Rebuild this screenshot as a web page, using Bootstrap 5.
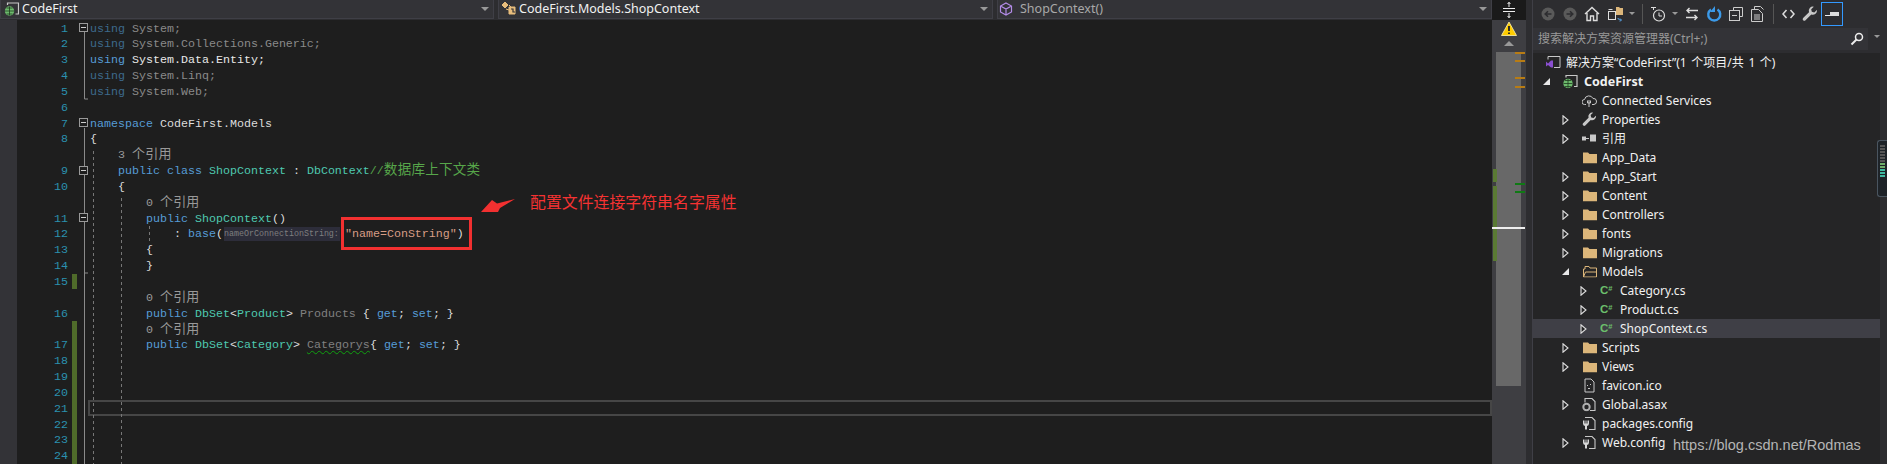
<!DOCTYPE html>
<html lang="zh">
<head>
<meta charset="utf-8">
<title>CodeFirst</title>
<link rel="stylesheet" href="https://cdn.jsdelivr.net/npm/bootstrap@5.3.0/dist/css/bootstrap.min.css">
<style>
html,body{height:464px;overflow:hidden;background:#2d2d30}
body{font-family:"Noto Sans","Noto Sans CJK SC",sans-serif;font-size:12px;color:#f1f1f1}
.vs-shell{height:464px;width:1887px}
.ed-main{width:1492px;height:464px}
.nav-strip{height:20px;background:#2d2d30;flex:none}
.nav-drop{height:19px;background:#333337;border:1px solid #3f3f46;border-top:0;color:#f1f1f1;font-size:12.5px;line-height:18px}
.nd1{width:494px;margin-right:4px}.nd2{width:495px;margin-right:4px}.nd3{width:495px;color:#a8a8a8}
.nd1 .nav-ico{margin-left:3px}.nd2 .nav-ico{margin-left:2px}.nd3 .nav-ico{margin-left:0}
.nav-ico{width:16px;height:14px;margin-right:2px;flex:none}
.nd2 .nav-ico{margin-right:2px}
.drop-caret{width:0;height:0;border:4px solid transparent;border-top-color:#999;border-bottom:0;margin-right:4px;margin-left:auto}
.code-pane{flex:1;background:#1e1e1e;border-left:17px solid #333337;font-family:"Liberation Mono","Noto Sans CJK SC",monospace;font-size:11.67px;color:#dcdcdc}
.crow{height:15.85px;line-height:15.85px;white-space:pre}
.ln{width:51px;text-align:right;color:#2b91af;flex:none;padding-top:1.5px}
.chg{width:5px;margin-left:4px;flex:none}
.chg.on{background:#4f6b2a}
.fold{width:13px;flex:none;position:relative}
.fbox{position:absolute;z-index:2;left:2px;top:3px;width:9px;height:9px;border:1px solid #999;background:#1e1e1e}
.fbox::after{content:"";position:absolute;left:1px;right:1px;top:3px;height:1px;background:#ccc}
.codetxt{flex:1;padding-top:1.5px}
.cur{margin-left:-2px;box-shadow:inset 0 0 0 2px #464646;height:16px}
.kw{color:#569cd6}.ty{color:#4ec9b0}.cm{color:#57a64a}.st{color:#d69d85}
.dk{color:#3d6a8c}.dt{color:#8a8a8a}.gy{color:#808080}.brt{color:#e8e8e8}
.cjk{font-family:"Noto Sans CJK SC",sans-serif;font-size:13.6px;letter-spacing:.2px;line-height:0}
.lens{color:#999}.lens .cjk{font-size:13px}
.hint{display:inline-block;width:116px;height:14px;line-height:14px;margin:0 5px 0 1px;background:#2d2d3a;color:#7f7f7f;font-size:8.33px;vertical-align:top;margin-top:0}
.squig{text-decoration:underline wavy #10a010 1px;text-underline-offset:2px}
.guides{position:absolute;left:0;top:0;z-index:1;pointer-events:none}
.redbox{position:absolute;z-index:3;left:341px;top:217px;width:131px;height:33px;border:3px solid #f23030}
.annot{position:absolute;z-index:3;left:530px;top:191px;color:#f53232;font-family:"Noto Sans CJK SC",sans-serif;font-size:15.9px;line-height:21px;white-space:nowrap}
.scroll-col{width:34px;height:464px;background:#3e3e42;flex:none}
.split-btn{height:20px;background:#1a1a1a;flex:none}
.scroll-area{flex:1}
.warn{position:absolute;left:8px;top:1px}
.up-arr{position:absolute;left:12px;top:21px;width:0;height:0;border:5px solid transparent;border-bottom-color:#999;border-top:0;border-left-width:5px}
.thumb{position:absolute;left:4px;top:32px;width:25px;height:334px;background:#686868}
.mk{position:absolute;left:23px;width:10px;height:2px}
.mo{background:#b87c14}.mg{background:#0f7a14}
.m1{top:32px}.m2{top:40px}.m3{top:57px}.m4{top:66px}.m5{top:163px}.m6{top:171px}
.gb{position:absolute;left:1px;width:4px;background:#5a7a34}
.gb1{top:149px;height:13px}.gb2{top:166px;height:75px}
.wl{position:absolute;left:0;right:1px;top:207px;height:2px;background:#eee}
.gap-col{width:7px;background:#2d2d30;flex:none;border-right:1px solid #3f3f46}
.sol-col{width:347px;height:464px;background:#252526;flex:none}
.edge-col{width:7px;flex:none;background:#2d2d30}
.tb{height:27px;background:#2d2d30;padding-left:4px;flex:none}
.tc{height:26px;flex:none}
.w22{width:22px}.w24{width:24px}.w10{width:10px}.w12{width:12px}.w8{width:8px}
.tsep{width:1px;height:20px;background:#555}
.tcaret{width:0;height:0;border:3.5px solid transparent;border-top-color:#999;border-bottom:0}
.pinbtn{width:22px;height:24px;border:1px solid #3399ff;margin-top:1px;flex:none}
.srch{height:22px;background:#333337;flex:none;margin-top:1px;color:#999;padding-left:5px;width:335px;line-height:22px;white-space:nowrap}
.srch-wrap{height:26px;background:#2d2d30;flex:none}
.srch-caret{margin-left:6px}
.tree{padding-top:0;flex:1}
.trow{height:19px;line-height:19px;white-space:nowrap;flex:none;color:#f1f1f1}
.trow.sel{background:#3f3f46}
.lv0{padding-left:13px;word-spacing:1.500px}.lv1{padding-left:10px}.lv2{padding-left:29px}.lv3{padding-left:47px}
.exp{width:20px;flex:none}
.tico{width:20px;flex:none;height:19px}
.prj-name{font-size:12.5px;margin-left:1px}
.cs{color:#6cbf6c;font-weight:700;font-size:11.5px;font-family:"Liberation Sans",sans-serif}
.cs sup{font-size:7.5px;top:-.35em;color:#6cbf6c}
.watermark{position:absolute;z-index:3;left:1673px;top:435px;color:#b5b5b5;font-family:"Liberation Sans",sans-serif;font-size:14.5px;line-height:20px;white-space:nowrap}
.rail{position:absolute;z-index:3;right:0;top:140px;width:10px;height:57px;background:#1e2328;border:1px solid #4a5560;border-right:0;border-radius:3px 0 0 3px;padding:4px 2px}
.rail i{display:block;height:2px;margin-bottom:1px;background:#555}
.rail i.rg{background:#6fae6a}.rail i.rc{background:#3fb8a0}
</style>
</head>
<body>
<svg width="0" height="0" class="position-absolute">
  <symbol id="s-fld" viewBox="0 0 14 12"><path d="M0 1h5l1.500 1.500H14V12H0z" fill="#dcb67a"/></symbol>
  <symbol id="s-fldo" viewBox="0 0 14 12"><path d="M.5 11.500V3.500H2V1h4l1 1.500h6.500v9z" fill="none" stroke="#dcb67a"/><path d="M.5 11.500l2-5H13.500" fill="none" stroke="#dcb67a"/></symbol>
  <symbol id="s-tri" viewBox="0 0 7 10"><path d="M1 .8V9.200L6 5z" fill="#252526" stroke="#e0e0e0" stroke-width="1.100"/></symbol>
  <symbol id="s-tris" viewBox="0 0 7 7"><path d="M7 0V7H0z" fill="#e8e8e8"/></symbol>
  <symbol id="s-proj" viewBox="0 0 15 14"><path d="M3 3V1h11v11h-3" fill="none" stroke="#c8c8c8" stroke-width="1.200"/><circle cx="5" cy="9" r="4.700" fill="#6dbb6d"/><path d="M.5 9h9M5 4.500v9M2 6h6M2 12h6" stroke="#1e3a1e" stroke-width=".8"/></symbol>
  <symbol id="s-gear" viewBox="0 0 14 14"><path d="M3 5V1h7l3 3v9H8" fill="none" stroke="#c8c8c8" stroke-width="1.100"/><circle cx="4.500" cy="9.500" r="3.200" fill="none" stroke="#b0b0b0" stroke-width="2"/></symbol>
  <symbol id="s-cfg" viewBox="0 0 14 14"><path d="M3 1h7l3 3v9H7" fill="none" stroke="#c8c8c8" stroke-width="1.100"/><path d="M1 4v3a2.500 2.500 0 0 0 2 2.500V13h2V9.500A2.500 2.500 0 0 0 7 7V4H5.500v3h-1V4h-1v3h-1V4z" fill="#d8d8d8"/></symbol>
  <symbol id="s-wr" viewBox="0 0 16 16"><path d="M15 4.500a4.200 4.200 0 0 1-5.700 4L3.500 14.300a1.700 1.700 0 0 1-2.400-2.400L7 6.200A4.200 4.200 0 0 1 11.800.7L9.200 3.300l.6 2.500 2.500.6 2.500-2.500z" fill="#c8c8c8"/></symbol>
  <symbol id="s-cl" viewBox="0 0 14 14"><circle cx="7" cy="7" r="6.500" fill="#5a5a5a"/><path d="M10.500 7H4.500M7 4.200 4.200 7 7 9.800" fill="none" stroke="#2d2d30" stroke-width="1.600"/></symbol>
</svg>

<div class="vs-shell d-flex position-relative">
  <div class="ed-main d-flex flex-column position-relative">
    <div class="nav-strip d-flex">
      <div class="nav-drop nd1 d-flex align-items-center">
        <svg class="nav-ico" viewBox="0 0 15 14"><use href="#s-proj"/></svg><span>CodeFirst</span><i class="drop-caret"></i>
      </div>
      <div class="nav-drop nd2 d-flex align-items-center">
        <svg class="nav-ico" viewBox="0 0 16 14"><path d="M1 3l3-3 3 3-3 3zM8 5h6v7H8zM5 7l3 1M8 3l2 2" fill="#e8bd7c" stroke="#e8bd7c"/><path d="M10 7h2v3h2" fill="none" stroke="#333337" stroke-width="1.200"/></svg><span>CodeFirst.Models.ShopContext</span><i class="drop-caret"></i>
      </div>
      <div class="nav-drop nd3 d-flex align-items-center">
        <svg class="nav-ico" viewBox="0 0 16 14"><path d="M8 1l5.500 3v6L8 13l-5.500-3V4zM2.500 4 8 7l5.500-3M8 7v6" fill="none" stroke="#b48ce8" stroke-width="1.200"/></svg><span class="ms-1">ShopContext()</span><i class="drop-caret"></i>
      </div>
    </div>
    <div class="code-pane">
      <div class="crow d-flex"><span class="ln">1</span><span class="chg"></span><span class="fold"><i class="fbox"></i></span><span class="codetxt"><span class="dk">using</span> <span class="dt">System;</span></span></div>
      <div class="crow d-flex"><span class="ln">2</span><span class="chg"></span><span class="fold"></span><span class="codetxt"><span class="dk">using</span> <span class="dt">System.Collections.Generic;</span></span></div>
      <div class="crow d-flex"><span class="ln">3</span><span class="chg"></span><span class="fold"></span><span class="codetxt"><span class="kw">using</span> <span class="brt">System.Data.Entity;</span></span></div>
      <div class="crow d-flex"><span class="ln">4</span><span class="chg"></span><span class="fold"></span><span class="codetxt"><span class="dk">using</span> <span class="dt">System.Linq;</span></span></div>
      <div class="crow d-flex"><span class="ln">5</span><span class="chg"></span><span class="fold"></span><span class="codetxt"><span class="dk">using</span> <span class="dt">System.Web;</span></span></div>
      <div class="crow d-flex"><span class="ln">6</span><span class="chg"></span><span class="fold"></span><span class="codetxt"></span></div>
      <div class="crow d-flex"><span class="ln">7</span><span class="chg"></span><span class="fold"><i class="fbox"></i></span><span class="codetxt"><span class="kw">namespace</span> CodeFirst.Models</span></div>
      <div class="crow d-flex"><span class="ln">8</span><span class="chg"></span><span class="fold"></span><span class="codetxt">{</span></div>
      <div class="crow d-flex"><span class="ln"></span><span class="chg"></span><span class="fold"></span><span class="codetxt lens">    3 <span class="cjk">个引用</span></span></div>
      <div class="crow d-flex"><span class="ln">9</span><span class="chg"></span><span class="fold"><i class="fbox"></i></span><span class="codetxt">    <span class="kw">public class</span> <span class="ty">ShopContext</span> : <span class="ty">DbContext</span><span class="cm">//<span class="cjk">数据库上下文类</span></span></span></div>
      <div class="crow d-flex"><span class="ln">10</span><span class="chg"></span><span class="fold"></span><span class="codetxt">    {</span></div>
      <div class="crow d-flex"><span class="ln"></span><span class="chg"></span><span class="fold"></span><span class="codetxt lens">        0 <span class="cjk">个引用</span></span></div>
      <div class="crow d-flex"><span class="ln">11</span><span class="chg"></span><span class="fold"><i class="fbox"></i></span><span class="codetxt">        <span class="kw">public</span> <span class="ty">ShopContext</span>()</span></div>
      <div class="crow d-flex"><span class="ln">12</span><span class="chg"></span><span class="fold"></span><span class="codetxt">            : <span class="kw">base</span>(<span class="hint">nameOrConnectionString:</span><span class="st">"name=ConString"</span>)</span></div>
      <div class="crow d-flex"><span class="ln">13</span><span class="chg"></span><span class="fold"></span><span class="codetxt">        {</span></div>
      <div class="crow d-flex"><span class="ln">14</span><span class="chg"></span><span class="fold"></span><span class="codetxt">        }</span></div>
      <div class="crow d-flex"><span class="ln">15</span><span class="chg on"></span><span class="fold"></span><span class="codetxt"></span></div>
      <div class="crow d-flex"><span class="ln"></span><span class="chg"></span><span class="fold"></span><span class="codetxt lens">        0 <span class="cjk">个引用</span></span></div>
      <div class="crow d-flex"><span class="ln">16</span><span class="chg"></span><span class="fold"></span><span class="codetxt">        <span class="kw">public</span> <span class="ty">DbSet</span>&lt;<span class="ty">Product</span>&gt; <span class="gy">Products</span> { <span class="kw">get</span>; <span class="kw">set</span>; }</span></div>
      <div class="crow d-flex"><span class="ln"></span><span class="chg on"></span><span class="fold"></span><span class="codetxt lens">        0 <span class="cjk">个引用</span></span></div>
      <div class="crow d-flex"><span class="ln">17</span><span class="chg on"></span><span class="fold"></span><span class="codetxt">        <span class="kw">public</span> <span class="ty">DbSet</span>&lt;<span class="ty">Category</span>&gt; <span class="gy squig">Categorys</span>{ <span class="kw">get</span>; <span class="kw">set</span>; }</span></div>
      <div class="crow d-flex"><span class="ln">18</span><span class="chg on"></span><span class="fold"></span><span class="codetxt"></span></div>
      <div class="crow d-flex"><span class="ln">19</span><span class="chg on"></span><span class="fold"></span><span class="codetxt"></span></div>
      <div class="crow d-flex"><span class="ln">20</span><span class="chg on"></span><span class="fold"></span><span class="codetxt"></span></div>
      <div class="crow d-flex"><span class="ln">21</span><span class="chg on"></span><span class="fold"></span><span class="codetxt cur"></span></div>
      <div class="crow d-flex"><span class="ln">22</span><span class="chg on"></span><span class="fold"></span><span class="codetxt"></span></div>
      <div class="crow d-flex"><span class="ln">23</span><span class="chg on"></span><span class="fold"></span><span class="codetxt"></span></div>
      <div class="crow d-flex"><span class="ln">24</span><span class="chg on"></span><span class="fold"></span><span class="codetxt"></span></div>
    </div>
    <svg class="guides" width="600" height="464" viewBox="0 0 600 464">
      <path d="M84.500 30V99H88M84.500 128V464M84.500 273H88" fill="none" stroke="#8a8a8a"/>
      <path d="M93.500 151V464M121.500 198V464M149.500 226V242" fill="none" stroke="#777" stroke-dasharray="3 3"/>
      <path d="M481 212l11-12 5 3.500 18-4.500-15 9-2 4z" fill="#f23030"/>
    </svg>
    <div class="redbox"></div>
    <div class="annot">配置文件连接字符串名字属性</div>
  </div>

  <div class="scroll-col d-flex flex-column">
    <div class="split-btn d-flex justify-content-center align-items-center">
      <svg width="14" height="16" viewBox="0 0 14 16"><path d="M1 6.500h12M1 9.500h12M7 0v5M7 11v5M5.500 2 7 .5 8.500 2M5.500 14 7 15.500 8.500 14" fill="none" stroke="#eee"/></svg>
    </div>
    <div class="scroll-area position-relative">
      <svg class="warn" width="18" height="16" viewBox="0 0 18 16"><path d="M9 1l7.500 13.500h-15z" fill="#ffcc00" stroke="#fff2b0" stroke-width=".8"/><path d="M9 5v5M9 11.500v1.500" stroke="#222" stroke-width="1.800"/></svg>
      <i class="up-arr"></i>
      <div class="thumb"></div>
      <i class="mk mo m1"></i><i class="mk mo m2"></i><i class="mk mo m3"></i><i class="mk mo m4"></i><i class="mk mg m5"></i><i class="mk mg m6"></i>
      <i class="gb gb1"></i><i class="gb gb2"></i><i class="wl"></i>
    </div>
  </div>
  <div class="gap-col"></div>

  <div class="sol-col d-flex flex-column">
    <div class="tb d-flex align-items-center">
      <div class="tc w22 d-flex align-items-center justify-content-center"><svg width="14" height="14"><use href="#s-cl"/></svg></div>
      <div class="tc w22 d-flex align-items-center justify-content-center"><svg width="14" height="14" viewBox="0 0 14 14"><circle cx="7" cy="7" r="6.500" fill="#5a5a5a"/><path d="M3.500 7h6M7 4.200 9.800 7 7 9.800" fill="none" stroke="#2d2d30" stroke-width="1.600"/></svg></div>
      <div class="tc w22 d-flex align-items-center justify-content-center"><svg width="16" height="16" viewBox="0 0 16 16"><path d="M1 8 8 1.500 15 8M3 7v7.500h3.500V10h3v4.500H13V7" fill="none" stroke="#ddd" stroke-width="1.400"/></svg></div>
      <div class="tc w24 d-flex align-items-center justify-content-center"><svg width="17" height="16" viewBox="0 0 17 16"><path d="M9 1h3l1 1h3v7H9z" fill="#dcb67a"/><rect x="1.500" y="5.500" width="7" height="8" fill="none" stroke="#ddd"/><path d="M1.500 3.500h4" stroke="#ddd"/><path d="M11 12c0 1.500 1.500 2 3 2M13 12.500l1.500 1.500-1.500 1.500" fill="none" stroke="#5aa9f0"/></svg></div>
      <div class="tc w10 d-flex align-items-center justify-content-center"><i class="tcaret"></i></div>
      <div class="tc w10 d-flex align-items-center justify-content-center"><i class="tsep"></i></div>
      <div class="tc w22 d-flex align-items-center justify-content-center"><svg width="16" height="16" viewBox="0 0 16 16"><circle cx="9" cy="9.500" r="5.500" fill="none" stroke="#ddd" stroke-width="1.200"/><path d="M9 6.500V10h3M1 1.500h5M3.500 1.500V4" fill="none" stroke="#ddd"/></svg></div>
      <div class="tc w12 d-flex align-items-center justify-content-center"><i class="tcaret"></i></div>
      <div class="tc w22 d-flex align-items-center justify-content-center"><svg width="14" height="14" viewBox="0 0 14 14"><path d="M13 3.500H2M4.500 1 2 3.500 4.500 6M1 10.500h11M9.500 8 12 10.500 9.500 13" fill="none" stroke="#ddd" stroke-width="1.400"/></svg></div>
      <div class="tc w22 d-flex align-items-center justify-content-center"><svg width="16" height="16" viewBox="0 0 16 16"><path d="M5 3.500a6 6 0 1 0 6.500 0" fill="none" stroke="#3c9ae8" stroke-width="2.400"/><path d="M9 0v6h-5z" fill="#3c9ae8"/></svg></div>
      <div class="tc w22 d-flex align-items-center justify-content-center"><svg width="14" height="14" viewBox="0 0 14 14"><path d="M4.500 3V.5h9v9H11" fill="none" stroke="#ccc"/><rect x=".5" y="3.500" width="10" height="10" fill="none" stroke="#ccc"/><path d="M3 8.500h5" stroke="#ccc"/></svg></div>
      <div class="tc w22 d-flex align-items-center justify-content-center"><svg width="15" height="16" viewBox="0 0 15 16"><path d="M3.500 3V.5h6l3 3" fill="none" stroke="#ccc"/><path d="M.5 3.500h7l4 4v8h-11z" fill="none" stroke="#ccc"/><path d="M3 9h6M3 11h6M3 13h6" stroke="#ccc"/></svg></div>
      <div class="tc w8 d-flex align-items-center justify-content-center"><i class="tsep"></i></div>
      <div class="tc w22 d-flex align-items-center justify-content-center"><svg width="13" height="10" viewBox="0 0 13 10"><path d="M4.500 1 1 5l3.500 4M8.500 1 12 5 8.500 9" fill="none" stroke="#ddd" stroke-width="1.500"/></svg></div>
      <div class="tc w22 d-flex align-items-center justify-content-center"><svg width="16" height="16"><use href="#s-wr"/></svg></div>
      <div class="pinbtn d-flex align-items-center justify-content-center"><svg width="14" height="6" viewBox="0 0 14 6"><path d="M0 4.500h5" stroke="#eee"/><rect x="5" y="1" width="9" height="4" fill="#ddd"/></svg></div>
    </div>
    <div class="srch-wrap d-flex align-items-start">
      <div class="srch d-flex align-items-center">搜索解决方案资源管理器(Ctrl+;)
        <svg class="ms-auto me-1" width="14" height="14" viewBox="0 0 14 14"><circle cx="9" cy="5" r="3.500" fill="none" stroke="#eee" stroke-width="1.500"/><path d="M6.500 7.500 1.500 12.500" stroke="#eee" stroke-width="2"/></svg>
      </div>
      <i class="tcaret srch-caret mt-2"></i>
    </div>
    <div class="tree d-flex flex-column">
      <div class="trow d-flex align-items-center lv0"><svg class="tico" width="20" height="14" viewBox="0 0 20 14"><path d="M2 4V1h12v11H8" fill="none" stroke="#c8c8c8"/><path d="M0 6l2 2 3-3h2v7H5L2 9.500 0 11z" fill="#8a4fd0"/></svg><span>解决方案“CodeFirst”(1 个项目/共 1 个)</span></div>
      <div class="trow d-flex align-items-center lv1"><span class="exp"><svg class="d-block" width="7" height="7"><use href="#s-tris"/></svg></span><svg class="tico" width="20" height="14" viewBox="0 0 20 14"><use href="#s-proj" width="15" height="14"/></svg><span class="fw-bold prj-name">CodeFirst</span></div>
      <div class="trow d-flex align-items-center lv2"><span class="exp"></span><svg class="tico" width="20" height="14" viewBox="0 0 20 14"><path d="M4 10.500H2.500a2.500 2.500 0 0 1 0-5 4.500 4.500 0 0 1 8.500-1 3 3 0 0 1 1 6H10M7 6v7M5.500 6.500v2.500h3V6.500" fill="none" stroke="#c8c8c8" transform="translate(0 .5)"/></svg><span>Connected Services</span></div>
      <div class="trow d-flex align-items-center lv2"><span class="exp"><svg class="d-block" width="7" height="10"><use href="#s-tri"/></svg></span><svg class="tico" width="20" height="15" viewBox="0 0 20 15"><use href="#s-wr" width="15" height="15"/></svg><span>Properties</span></div>
      <div class="trow d-flex align-items-center lv2"><span class="exp"><svg class="d-block" width="7" height="10"><use href="#s-tri"/></svg></span><svg class="tico" width="20" height="8" viewBox="0 0 20 8"><rect x="0" y="2" width="4" height="4" fill="#c8c8c8"/><path d="M4 4h3" stroke="#c8c8c8"/><rect x="8" y="0" width="6" height="7" fill="#c8c8c8"/></svg><span>引用</span></div>
      <div class="trow d-flex align-items-center lv2"><span class="exp"></span><svg class="tico" width="20" height="12" viewBox="0 0 20 12"><use href="#s-fld" x="1" width="14" height="12"/></svg><span>App_Data</span></div>
      <div class="trow d-flex align-items-center lv2"><span class="exp"><svg class="d-block" width="7" height="10"><use href="#s-tri"/></svg></span><svg class="tico" width="20" height="12" viewBox="0 0 20 12"><use href="#s-fld" x="1" width="14" height="12"/></svg><span>App_Start</span></div>
      <div class="trow d-flex align-items-center lv2"><span class="exp"><svg class="d-block" width="7" height="10"><use href="#s-tri"/></svg></span><svg class="tico" width="20" height="12" viewBox="0 0 20 12"><use href="#s-fld" x="1" width="14" height="12"/></svg><span>Content</span></div>
      <div class="trow d-flex align-items-center lv2"><span class="exp"><svg class="d-block" width="7" height="10"><use href="#s-tri"/></svg></span><svg class="tico" width="20" height="12" viewBox="0 0 20 12"><use href="#s-fld" x="1" width="14" height="12"/></svg><span>Controllers</span></div>
      <div class="trow d-flex align-items-center lv2"><span class="exp"><svg class="d-block" width="7" height="10"><use href="#s-tri"/></svg></span><svg class="tico" width="20" height="12" viewBox="0 0 20 12"><use href="#s-fld" x="1" width="14" height="12"/></svg><span>fonts</span></div>
      <div class="trow d-flex align-items-center lv2"><span class="exp"><svg class="d-block" width="7" height="10"><use href="#s-tri"/></svg></span><svg class="tico" width="20" height="12" viewBox="0 0 20 12"><use href="#s-fld" x="1" width="14" height="12"/></svg><span>Migrations</span></div>
      <div class="trow d-flex align-items-center lv2"><span class="exp"><svg class="d-block" width="7" height="7"><use href="#s-tris"/></svg></span><svg class="tico" width="20" height="12" viewBox="0 0 20 12"><use href="#s-fldo" x="1" width="14" height="12"/></svg><span>Models</span></div>
      <div class="trow d-flex align-items-center lv3"><span class="exp"><svg class="d-block" width="7" height="10"><use href="#s-tri"/></svg></span><span class="tico cs">C<sup>#</sup></span><span>Category.cs</span></div>
      <div class="trow d-flex align-items-center lv3"><span class="exp"><svg class="d-block" width="7" height="10"><use href="#s-tri"/></svg></span><span class="tico cs">C<sup>#</sup></span><span>Product.cs</span></div>
      <div class="trow d-flex align-items-center lv3 sel"><span class="exp"><svg class="d-block" width="7" height="10"><use href="#s-tri"/></svg></span><span class="tico cs">C<sup>#</sup></span><span>ShopContext.cs</span></div>
      <div class="trow d-flex align-items-center lv2"><span class="exp"><svg class="d-block" width="7" height="10"><use href="#s-tri"/></svg></span><svg class="tico" width="20" height="12" viewBox="0 0 20 12"><use href="#s-fld" x="1" width="14" height="12"/></svg><span>Scripts</span></div>
      <div class="trow d-flex align-items-center lv2"><span class="exp"><svg class="d-block" width="7" height="10"><use href="#s-tri"/></svg></span><svg class="tico" width="20" height="12" viewBox="0 0 20 12"><use href="#s-fld" x="1" width="14" height="12"/></svg><span>Views</span></div>
      <div class="trow d-flex align-items-center lv2"><span class="exp"></span><svg class="tico" width="20" height="14" viewBox="0 0 20 14"><path d="M3 .5h6l3 3v10H3z" fill="none" stroke="#c8c8c8"/><path d="M5 7h1M8 6h1M6 10h2" stroke="#c8c8c8"/></svg><span>favicon.ico</span></div>
      <div class="trow d-flex align-items-center lv2"><span class="exp"><svg class="d-block" width="7" height="10"><use href="#s-tri"/></svg></span><svg class="tico" width="20" height="14" viewBox="0 0 20 14"><use href="#s-gear" width="14" height="14"/></svg><span>Global.asax</span></div>
      <div class="trow d-flex align-items-center lv2"><span class="exp"></span><svg class="tico" width="20" height="14" viewBox="0 0 20 14"><use href="#s-cfg" width="14" height="14"/></svg><span>packages.config</span></div>
      <div class="trow d-flex align-items-center lv2"><span class="exp"><svg class="d-block" width="7" height="10"><use href="#s-tri"/></svg></span><svg class="tico" width="20" height="14" viewBox="0 0 20 14"><use href="#s-cfg" width="14" height="14"/></svg><span>Web.config</span></div>
    </div>
  </div>
  <div class="edge-col"></div>
  <div class="rail"><i></i><i></i><i></i><i></i><i></i><i></i><i class="rg"></i><i class="rg"></i><i class="rc"></i><i class="rc"></i><i class="rc"></i></div>
  <div class="watermark">https://blog.csdn.net/Rodmas</div>
</div>
<script src="https://cdn.jsdelivr.net/npm/bootstrap@5.3.0/dist/js/bootstrap.bundle.min.js"></script>
</body>
</html>
